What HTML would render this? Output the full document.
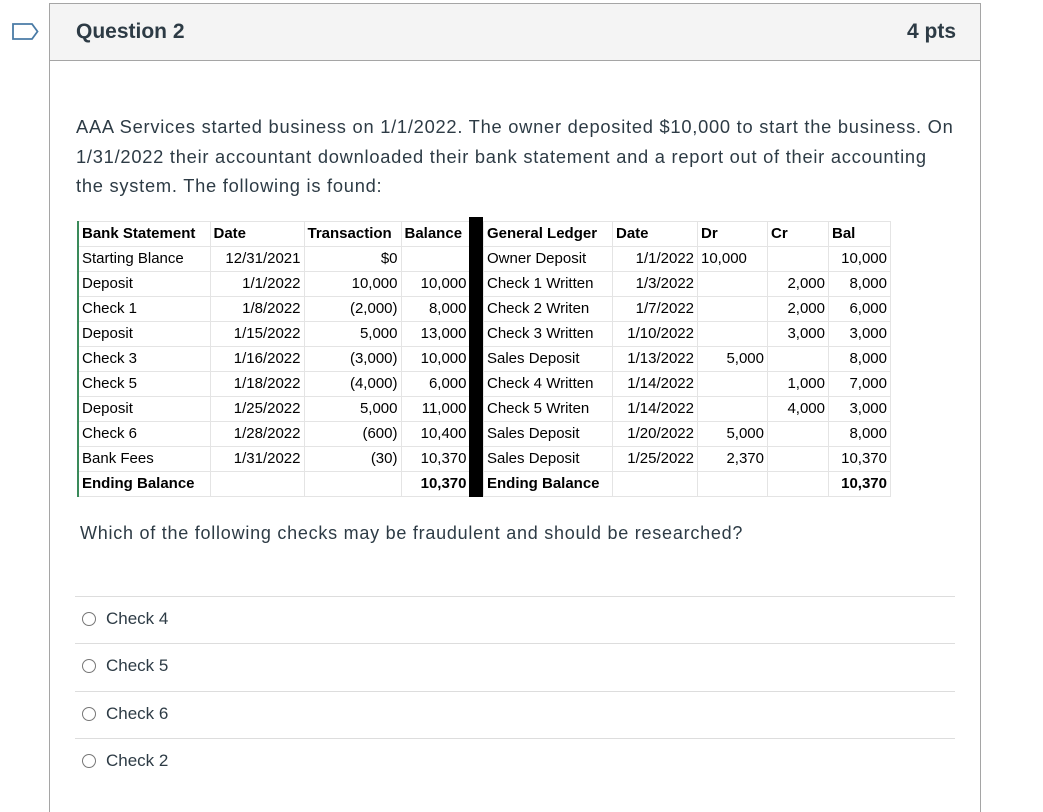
<!DOCTYPE html>
<html style="overflow:hidden;height:812px"><head><meta charset="utf-8"><style>
body{margin:0;background:#fff;width:1043px;height:812px;overflow:hidden;font-family:"Liberation Sans",sans-serif;color:#2d3b45;position:relative}
.box{position:absolute;left:49px;top:3px;width:932px;height:809px;border:1px solid #a5a5a5;border-bottom:none;box-sizing:border-box}
.hdr{height:56px;background:#f4f4f4;border-bottom:1px solid #a5a5a5;position:relative}
.hdr .t{position:absolute;left:26px;top:16px;font-size:21px;font-weight:bold;color:#2d3b45}
.hdr .p{position:absolute;right:24px;top:16px;font-size:21px;font-weight:bold;color:#2d3b45}
.flag{position:absolute;left:12px;top:23px}
.txt{position:absolute;left:76px;top:112px;width:940px;font-size:18.3px;letter-spacing:0.75px;line-height:29.5px;white-space:nowrap}
table{position:absolute;top:221px;border-collapse:collapse;font-size:15px;color:#000;table-layout:fixed}
td{height:24px;padding:0 3px;border:1px solid #e4e4e4;white-space:nowrap;overflow:hidden;line-height:24px}
td.r{text-align:right}
tr.b td{font-weight:bold}
.q{position:absolute;left:80px;top:523px;font-size:18px;letter-spacing:0.75px}
.ans{position:absolute;left:75px;width:880px;border-top:1px solid #ddd;height:46px}
.ans span{position:absolute;left:31px;top:12px;font-size:17px}
.ans i{position:absolute;left:7px;top:15px;width:12px;height:12px;border:1px solid #777;border-radius:50%}
</style></head><body>
<svg class="flag" width="27" height="17" viewBox="0 0 27 17"><path d="M1 1H20L25.5 8.5L20 16H1Z" fill="none" stroke="#4a7ba6" stroke-width="1.8"/></svg>
<div class="box"><div class="hdr"><div class="t">Question 2</div><div class="p">4 pts</div></div></div>
<div class="txt">AAA Services started business on 1/1/2022. The owner deposited $10,000 to start the business. On<br>1/31/2022 their accountant downloaded their bank statement and a report out of their accounting<br>the system. The following is found:</div>
<table style="left:77px;border-left:2px solid #3a8a5a">
<colgroup><col style="width:132px"><col style="width:94px"><col style="width:97px"><col style="width:69px"></colgroup>
<tr class="b"><td>Bank Statement</td><td>Date</td><td>Transaction</td><td>Balance</td></tr>
<tr><td>Starting Blance</td><td class="r">12/31/2021</td><td class="r">$0</td><td></td></tr>
<tr><td>Deposit</td><td class="r">1/1/2022</td><td class="r">10,000</td><td class="r">10,000</td></tr>
<tr><td>Check 1</td><td class="r">1/8/2022</td><td class="r">(2,000)</td><td class="r">8,000</td></tr>
<tr><td>Deposit</td><td class="r">1/15/2022</td><td class="r">5,000</td><td class="r">13,000</td></tr>
<tr><td>Check 3</td><td class="r">1/16/2022</td><td class="r">(3,000)</td><td class="r">10,000</td></tr>
<tr><td>Check 5</td><td class="r">1/18/2022</td><td class="r">(4,000)</td><td class="r">6,000</td></tr>
<tr><td>Deposit</td><td class="r">1/25/2022</td><td class="r">5,000</td><td class="r">11,000</td></tr>
<tr><td>Check 6</td><td class="r">1/28/2022</td><td class="r">(600)</td><td class="r">10,400</td></tr>
<tr><td>Bank Fees</td><td class="r">1/31/2022</td><td class="r">(30)</td><td class="r">10,370</td></tr>
<tr class="b"><td>Ending Balance</td><td></td><td></td><td class="r">10,370</td></tr>
</table>
<div style="position:absolute;left:469px;top:217px;width:14px;height:280px;background:#000"></div>
<table style="left:483px">
<colgroup><col style="width:129px"><col style="width:85px"><col style="width:70px"><col style="width:61px"><col style="width:62px"></colgroup>
<tr class="b"><td>General Ledger</td><td>Date</td><td>Dr</td><td>Cr</td><td>Bal</td></tr>
<tr><td>Owner Deposit</td><td class="r">1/1/2022</td><td>10,000</td><td></td><td class="r">10,000</td></tr>
<tr><td>Check 1 Written</td><td class="r">1/3/2022</td><td></td><td class="r">2,000</td><td class="r">8,000</td></tr>
<tr><td>Check 2 Writen</td><td class="r">1/7/2022</td><td></td><td class="r">2,000</td><td class="r">6,000</td></tr>
<tr><td>Check 3 Written</td><td class="r">1/10/2022</td><td></td><td class="r">3,000</td><td class="r">3,000</td></tr>
<tr><td>Sales Deposit</td><td class="r">1/13/2022</td><td class="r">5,000</td><td></td><td class="r">8,000</td></tr>
<tr><td>Check 4 Written</td><td class="r">1/14/2022</td><td></td><td class="r">1,000</td><td class="r">7,000</td></tr>
<tr><td>Check 5 Writen</td><td class="r">1/14/2022</td><td></td><td class="r">4,000</td><td class="r">3,000</td></tr>
<tr><td>Sales Deposit</td><td class="r">1/20/2022</td><td class="r">5,000</td><td></td><td class="r">8,000</td></tr>
<tr><td>Sales Deposit</td><td class="r">1/25/2022</td><td class="r">2,370</td><td></td><td class="r">10,370</td></tr>
<tr class="b"><td>Ending Balance</td><td></td><td></td><td></td><td class="r">10,370</td></tr>
</table>
<div class="q">Which of the following checks may be fraudulent and should be researched?</div>
<div class="ans" style="top:596px"><i></i><span>Check 4</span></div>
<div class="ans" style="top:643px"><i></i><span>Check 5</span></div>
<div class="ans" style="top:691px"><i></i><span>Check 6</span></div>
<div class="ans" style="top:738px"><i></i><span>Check 2</span></div>
</body></html>
